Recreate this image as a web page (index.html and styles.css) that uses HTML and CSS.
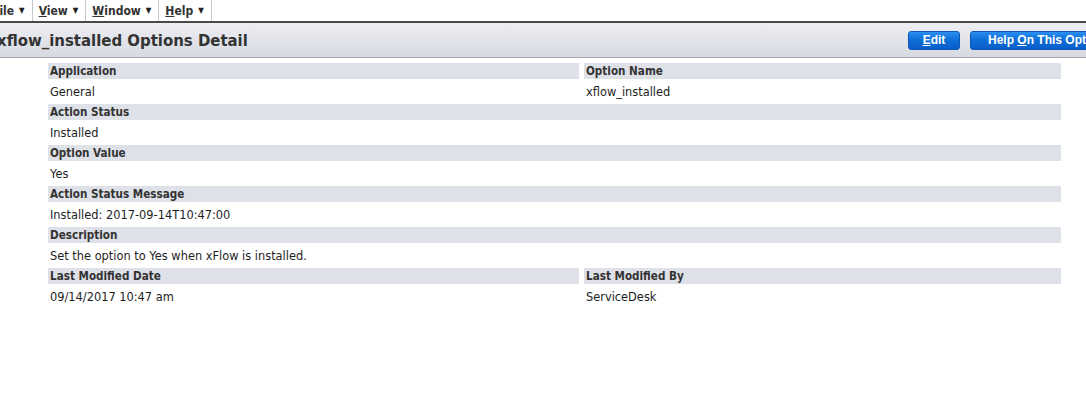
FILE: index.html
```html
<!DOCTYPE html>
<html>
<head>
<meta charset="utf-8">
<link rel="stylesheet" href="styles.css">
</head>
<body>
<div class="menubar">
  <div class="menu first"><span class="lbl"><u>F</u>ile</span><span class="arr">▼</span></div>
  <div class="menu"><span class="lbl"><u>V</u>iew</span><span class="arr">▼</span></div>
  <div class="menu"><span class="lbl"><u>W</u>indow</span><span class="arr">▼</span></div>
  <div class="menu"><span class="lbl"><u>H</u>elp</span><span class="arr">▼</span></div>
</div>
<div class="titlebar">
  <h1 class="title">xflow_installed Options Detail</h1>
  <div class="actions">
    <button class="btn btn-edit"><u>E</u>dit</button>
    <button class="btn btn-help">Help <u>O</u>n This Option</button>
  </div>
</div>
<div class="detail">
  <div class="lab">Application</div><div class="lab">Option Name</div>
  <div class="val">General</div><div class="val">xflow_installed</div>
  <div class="lab span">Action Status</div>
  <div class="val span">Installed</div>
  <div class="lab span">Option Value</div>
  <div class="val span">Yes</div>
  <div class="lab span">Action Status Message</div>
  <div class="val span">Installed: 2017-09-14T10:47:00</div>
  <div class="lab span">Description</div>
  <div class="val span">Set the option to Yes when xFlow is installed.</div>
  <div class="lab">Last Modified Date</div><div class="lab">Last Modified By</div>
  <div class="val">09/14/2017 10:47 am</div><div class="val">ServiceDesk</div>
</div>
</body>
</html>
```
FILE: styles.css
```css
html, body {
  margin: 0;
  padding: 0;
  background: #ffffff;
  overflow: hidden;
  font-family: "DejaVu Sans Condensed", "DejaVu Sans", sans-serif;
  color: #333333;
}

.menubar {
  display: flex;
  height: 21px;
  align-items: stretch;
}

.menu {
  display: flex;
  align-items: center;
  gap: 5px;
  padding: 0 7px 0 6px;
  border-right: 1px solid #c4c6cc;
  font-size: 12px;
  font-weight: bold;
  color: #333;
}

.menu.first {
  margin-left: -14px;
}

.menu u {
  text-decoration: underline;
}

.arr {
  font-size: 8px;
  font-weight: normal;
  color: #222;
}

.titlebar {
  display: flex;
  align-items: center;
  justify-content: space-between;
  height: 34px;
  border-top: 2px solid #4a4a4a;
  border-bottom: 1px solid #a6a8b0;
  background: linear-gradient(#eceef2, #d8dae2);
}

.title {
  margin: 0 0 0 -3px;
  font-size: 16.6px;
  font-weight: bold;
  color: #333;
  white-space: nowrap;
}

.actions {
  display: flex;
  gap: 10px;
  margin-right: -36px;
  padding-top: 1px;
}

.btn {
  height: 19px;
  padding: 0;
  border: 1px solid #0b57b8;
  border-radius: 3px;
  background: linear-gradient(#2a8ef0 0%, #0f6fd8 45%, #0a5ec8 100%);
  color: #ffffff;
  font-family: "Liberation Sans", Arial, sans-serif;
  font-weight: bold;
  font-size: 12px;
  line-height: 17px;
  white-space: nowrap;
}

.btn-edit {
  width: 52px;
}

.btn-help {
  width: 152px;
}

.detail {
  display: grid;
  grid-template-columns: 531px 477px;
  column-gap: 5px;
  margin: 5px 0 0 48px;
}

.span {
  grid-column: 1 / span 2;
}

.lab {
  height: 16px;
  line-height: 16px;
  padding-left: 2px;
  background: #dfe1e8;
  font-size: 11.6px;
  font-weight: bold;
  color: #333;
}

.val {
  height: 23px;
  line-height: 23px;
  padding: 2px 0 0 2px;
  font-family: "DejaVu Sans", sans-serif;
  font-size: 11.4px;
  color: #1e1e1e;
}
```
